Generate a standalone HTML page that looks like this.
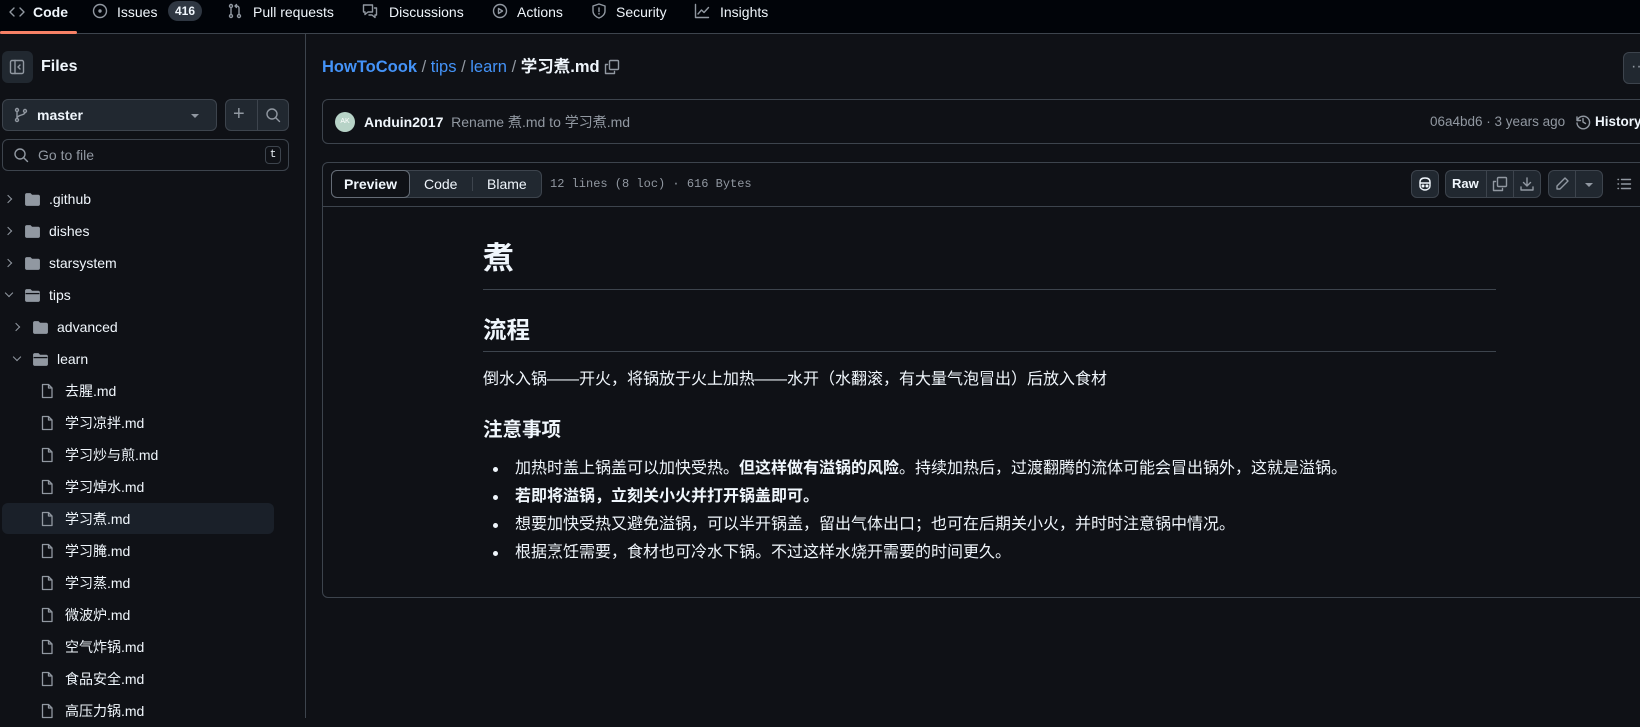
<!DOCTYPE html>
<html><head><meta charset="utf-8"><style>
*{box-sizing:border-box;margin:0;padding:0}
body{width:1640px;height:718px;overflow:hidden;background:#0f1116;color:#f0f6fc;font-family:"Liberation Sans","Noto Sans CJK SC",sans-serif;font-size:14px;position:relative}
.a{position:absolute}
.nav{left:0;top:0;width:1640px;height:34px;background:#010409;border-bottom:1px solid #3d444d}
.ni{position:absolute;top:3px;height:18px;line-height:18px;font-size:14px;color:#f0f6fc;white-space:nowrap}
.ic{position:absolute;fill:none;stroke:#9198a1;stroke-width:1.4;stroke-linecap:round;stroke-linejoin:round}
.side{left:0;top:34px;width:306px;height:684px;border-right:1px solid #3d444d}
.btn{position:absolute;border:1px solid #3d444d;border-radius:6px;background:#212830}
.tree{position:absolute;left:0;font-size:14px;color:#f0f6fc;height:32px;line-height:32px;white-space:nowrap}
.tree span{position:absolute;top:0}
.tree svg{position:absolute;top:8px}
.chev{position:absolute;width:6px;height:6px;border-right:1.5px solid #9198a1;border-bottom:1.5px solid #9198a1}
.box{border:1px solid #3d444d;border-radius:6px}
.md{position:absolute;left:483px;width:1013px;color:#f0f6fc}
.md li{position:absolute;left:32px;font-size:16px;white-space:nowrap;height:28px;line-height:28px}
.md li:before{content:"";position:absolute;left:-22px;top:12px;width:5px;height:5px;border-radius:50%;background:#f0f6fc}
</style></head><body>
<svg width="0" height="0" style="position:absolute"><defs>
<symbol id="fc" viewBox="0 0 16 16"><path d="M1 3.5C1 2.7 1.7 2 2.5 2h3.6l1.5 1.5h5.9c.8 0 1.5.7 1.5 1.5v7.5c0 .8-.7 1.5-1.5 1.5h-11C1.7 14 1 13.3 1 12.5z" fill="#9198a1"/></symbol>
<symbol id="fo" viewBox="0 0 16 16"><path d="M1 3.5C1 2.7 1.7 2 2.5 2h3.6l1.5 1.5h5.9c.8 0 1.5.7 1.5 1.5v7.5c0 .8-.7 1.5-1.5 1.5h-11C1.7 14 1 13.3 1 12.5z" fill="#9198a1"/><path d="M1.5 6.2h13" stroke="#0f1116" stroke-width="1.2"/></symbol>
<symbol id="fi" viewBox="0 0 16 16"><path d="M3.5 1.5h6l3.5 3.5v9.5h-9.5zM9.5 1.5V5H13" fill="none" stroke="#9198a1" stroke-width="1.3" stroke-linejoin="round"/></symbol>
</defs></svg>
<div class="a nav">
 <svg class="ic" style="left:9px;top:4px" width="16" height="16" viewBox="0 0 16 16"><path d="M5 4L1 8l4 4M11 4l4 4-4 4"/></svg>
 <div class="ni" style="left:33px;font-weight:bold">Code</div>
 <div class="a" style="left:0;top:31px;width:77px;height:3px;background:#f78166;border-radius:2px"></div>
 <svg class="ic" style="left:92px;top:3px" width="16" height="16" viewBox="0 0 16 16"><circle cx="8" cy="8" r="6.5"/><circle cx="8" cy="8" r="1" fill="#9198a1"/></svg>
 <div class="ni" style="left:117px">Issues</div>
 <div class="a" style="left:168px;top:1px;width:34px;height:20px;border-radius:10px;background:#2f3742;font-size:12px;line-height:20px;text-align:center;font-weight:bold">416</div>
 <svg class="ic" style="left:227px;top:3px" width="16" height="16" viewBox="0 0 16 16"><circle cx="4" cy="3" r="1.5"/><circle cx="4" cy="13" r="1.5"/><circle cx="12" cy="13" r="1.5"/><path d="M4 5v6M12 11V5c0-1-1-2-2-2H8M9.5 1.5L8 3l1.5 1.5"/></svg>
 <div class="ni" style="left:253px">Pull requests</div>
 <svg class="ic" style="left:362px;top:3px" width="16" height="16" viewBox="0 0 16 16"><path d="M1.5 2h9v7H6l-3 2.5V9H1.5zM12.5 5h2v7h-1.5v2.5L10 12H7"/></svg>
 <div class="ni" style="left:389px">Discussions</div>
 <svg class="ic" style="left:492px;top:3px" width="16" height="16" viewBox="0 0 16 16"><circle cx="8" cy="8" r="6.5"/><path d="M6.5 5.5v5l4-2.5z"/></svg>
 <div class="ni" style="left:517px">Actions</div>
 <svg class="ic" style="left:591px;top:3px" width="16" height="16" viewBox="0 0 16 16"><path d="M8 1l6 2v5c0 3.5-3 6-6 7-3-1-6-3.5-6-7V3zM8 5v3.5M8 10.5v.5"/></svg>
 <div class="ni" style="left:616px">Security</div>
 <svg class="ic" style="left:694px;top:3px" width="16" height="16" viewBox="0 0 16 16"><path d="M1.5 1.5v13h13M4 11l3.5-4 2.5 2.5 4.5-5"/></svg>
 <div class="ni" style="left:720px">Insights</div>
</div>

<div class="a side"></div>
<div class="btn" style="left:2px;top:51px;width:31px;height:32px;background:#212830;border:none"></div>
<svg class="ic" style="left:9px;top:59px" width="16" height="16" viewBox="0 0 16 16"><rect x="1.5" y="1.5" width="13" height="13" rx="1.5"/><path d="M6 1.5v13M11 6l-2 2 2 2"/></svg>
<div class="a" style="left:41px;top:57px;font-size:16px;font-weight:bold;line-height:20px">Files</div>
<div class="btn" style="left:2px;top:99px;width:215px;height:32px"></div>
<svg class="ic" style="left:13px;top:107px" width="16" height="16" viewBox="0 0 16 16"><circle cx="4" cy="3" r="1.5"/><circle cx="4" cy="13" r="1.5"/><circle cx="12" cy="4" r="1.5"/><path d="M4 4.5v7M12 5.5c0 3-8 2-8 6"/></svg>
<div class="a" style="left:37px;top:106px;font-weight:bold;line-height:18px">master</div>
<div class="a" style="left:191px;top:114px;border-left:4px solid transparent;border-right:4px solid transparent;border-top:4px solid #9198a1"></div>
<div class="btn" style="left:225px;top:99px;width:64px;height:32px"></div>
<div class="a" style="left:257px;top:99px;width:1px;height:32px;background:#3d444d"></div>
<div class="a" style="left:233px;top:103px;font-size:20px;color:#9198a1;line-height:22px">+</div>
<svg class="ic" style="left:265px;top:107px" width="16" height="16" viewBox="0 0 16 16"><circle cx="7" cy="7" r="5"/><path d="M11 11l3.5 3.5"/></svg>
<div class="a box" style="left:2px;top:139px;width:287px;height:32px;background:#0f1116"></div>
<svg class="ic" style="left:13px;top:147px" width="16" height="16" viewBox="0 0 16 16"><circle cx="7" cy="7" r="5"/><path d="M11 11l3.5 3.5"/></svg>
<div class="a" style="left:38px;top:146px;color:#9198a1;line-height:18px">Go to file</div>
<div class="a" style="left:265px;top:146px;width:16px;height:18px;border:1px solid #3d444d;border-radius:4px;font-size:11px;text-align:center;line-height:16px;color:#f0f6fc;font-family:'Liberation Mono',monospace">t</div>

<div class="a" style="left:2px;top:503px;width:272px;height:31px;background:#1a2029;border-radius:6px"></div>

<div class="tree" style="top:183px"><i class="chev" style="left:5px;top:13px;transform:rotate(-45deg)"></i><svg style="left:24px" width="17" height="17"><use href="#fc"/></svg><span style="left:49px">.github</span></div>
<div class="tree" style="top:215px"><i class="chev" style="left:5px;top:13px;transform:rotate(-45deg)"></i><svg style="left:24px" width="17" height="17"><use href="#fc"/></svg><span style="left:49px">dishes</span></div>
<div class="tree" style="top:247px"><i class="chev" style="left:5px;top:13px;transform:rotate(-45deg)"></i><svg style="left:24px" width="17" height="17"><use href="#fc"/></svg><span style="left:49px">starsystem</span></div>
<div class="tree" style="top:279px"><i class="chev" style="left:6px;top:11px;transform:rotate(45deg)"></i><svg style="left:24px" width="17" height="17"><use href="#fo"/></svg><span style="left:49px">tips</span></div>
<div class="tree" style="top:311px"><i class="chev" style="left:13px;top:13px;transform:rotate(-45deg)"></i><svg style="left:32px" width="17" height="17"><use href="#fc"/></svg><span style="left:57px">advanced</span></div>
<div class="tree" style="top:343px"><i class="chev" style="left:14px;top:11px;transform:rotate(45deg)"></i><svg style="left:32px" width="17" height="17"><use href="#fo"/></svg><span style="left:57px">learn</span></div>
<div class="tree" style="top:375px"><svg style="left:39px" width="16" height="16"><use href="#fi"/></svg><span style="left:65px">去腥.md</span></div>
<div class="tree" style="top:407px"><svg style="left:39px" width="16" height="16"><use href="#fi"/></svg><span style="left:65px">学习凉拌.md</span></div>
<div class="tree" style="top:439px"><svg style="left:39px" width="16" height="16"><use href="#fi"/></svg><span style="left:65px">学习炒与煎.md</span></div>
<div class="tree" style="top:471px"><svg style="left:39px" width="16" height="16"><use href="#fi"/></svg><span style="left:65px">学习焯水.md</span></div>
<div class="tree" style="top:503px"><svg style="left:39px" width="16" height="16"><use href="#fi"/></svg><span style="left:65px">学习煮.md</span></div>
<div class="tree" style="top:535px"><svg style="left:39px" width="16" height="16"><use href="#fi"/></svg><span style="left:65px">学习腌.md</span></div>
<div class="tree" style="top:567px"><svg style="left:39px" width="16" height="16"><use href="#fi"/></svg><span style="left:65px">学习蒸.md</span></div>
<div class="tree" style="top:599px"><svg style="left:39px" width="16" height="16"><use href="#fi"/></svg><span style="left:65px">微波炉.md</span></div>
<div class="tree" style="top:631px"><svg style="left:39px" width="16" height="16"><use href="#fi"/></svg><span style="left:65px">空气炸锅.md</span></div>
<div class="tree" style="top:663px"><svg style="left:39px" width="16" height="16"><use href="#fi"/></svg><span style="left:65px">食品安全.md</span></div>
<div class="tree" style="top:695px"><svg style="left:39px" width="16" height="16"><use href="#fi"/></svg><span style="left:65px">高压力锅.md</span></div>

<div class="a" style="left:322px;top:56px;font-size:16.5px;line-height:22px;white-space:nowrap"><span style="color:#4493f8;font-weight:bold">HowToCook</span> <span style="color:#9198a1">/</span> <span style="color:#4493f8">tips</span> <span style="color:#9198a1">/</span> <span style="color:#4493f8">learn</span> <span style="color:#9198a1">/</span> <b>学习煮.md</b></div>
<svg class="ic" style="left:604px;top:59px" width="16" height="16" viewBox="0 0 16 16"><rect x="5.5" y="1.5" width="9" height="9" rx="1"/><path d="M3.5 5.5h-2v9h9v-2"/></svg>
<div class="btn" style="left:1623px;top:52px;width:30px;height:32px"></div>
<div class="a" style="left:1631px;top:58px;color:#9198a1;font-size:16px">··</div>

<div class="a box" style="left:322px;top:99px;width:1340px;height:45px"></div>
<div class="a" style="left:335px;top:112px;width:20px;height:20px;border-radius:50%;background:#b7d3c7;font-size:7px;color:#fff;text-align:center;line-height:20px">AK</div>
<div class="a" style="left:364px;top:113px;line-height:18px;white-space:nowrap"><b>Anduin2017</b>&nbsp;&nbsp;<span style="color:#9198a1">Rename 煮.md to 学习煮.md</span></div>
<div class="a" style="left:1430px;top:113px;line-height:18px;color:#9198a1;font-size:13.5px;white-space:nowrap">06a4bd6 · 3 years ago</div>
<svg class="ic" style="left:1575px;top:114px;stroke:#9198a1" width="16" height="16" viewBox="0 0 16 16"><path d="M2 3v3.5h3.5"/><path d="M2.3 6.5A6.3 6.3 0 1 1 2 9"/><path d="M8 4.5V8l2.5 1.5"/></svg>
<div class="a" style="left:1595px;top:113px;line-height:18px;font-weight:bold;font-size:13.5px">History</div>

<div class="a box" style="left:322px;top:162px;width:1340px;height:436px"></div>
<div class="a" style="left:323px;top:206px;width:1320px;height:1px;background:#3d444d"></div>
<div class="a" style="left:331px;top:170px;width:211px;height:28px;border-radius:6px;background:#212830;border:1px solid #3d444d"></div>
<div class="a" style="left:331px;top:170px;width:79px;height:28px;border-radius:6px;background:#0f1116;border:1px solid #656c76;font-weight:bold;text-align:center;line-height:26px">Preview</div>
<div class="a" style="left:424px;top:170px;line-height:28px">Code</div>
<div class="a" style="left:472px;top:177px;width:1px;height:14px;background:#3d444d"></div>
<div class="a" style="left:487px;top:170px;line-height:28px">Blame</div>
<div class="a" style="left:550px;top:176px;font-family:'Liberation Mono',monospace;font-size:12px;color:#9198a1;line-height:16px;white-space:nowrap">12 lines (8 loc) · 616 Bytes</div>

<div class="btn" style="left:1411px;top:170px;width:28px;height:28px"></div>
<svg class="ic" style="left:1417px;top:176px;stroke:#f0f6fc" width="16" height="16" viewBox="0 0 16 16"><path d="M3 6c0-3 2-4 5-4s5 1 5 4v4c0 2-2 4-5 4s-5-2-5-4z"/><circle cx="6" cy="10" r=".8" fill="#f0f6fc"/><circle cx="10" cy="10" r=".8" fill="#f0f6fc"/><path d="M3 7h10"/></svg>
<div class="btn" style="left:1445px;top:170px;width:96px;height:28px"></div>
<div class="a" style="left:1486px;top:170px;width:1px;height:28px;background:#3d444d"></div>
<div class="a" style="left:1513px;top:170px;width:1px;height:28px;background:#3d444d"></div>
<div class="a" style="left:1452px;top:170px;line-height:28px;font-weight:bold;font-size:13px">Raw</div>
<svg class="ic" style="left:1492px;top:176px" width="16" height="16" viewBox="0 0 16 16"><rect x="5.5" y="1.5" width="9" height="9" rx="1"/><path d="M3.5 5.5h-2v9h9v-2"/></svg>
<svg class="ic" style="left:1519px;top:176px" width="16" height="16" viewBox="0 0 16 16"><path d="M8 2v8M4.5 6.5L8 10l3.5-3.5M2 11v3h12v-3"/></svg>
<div class="btn" style="left:1548px;top:170px;width:55px;height:28px"></div>
<div class="a" style="left:1575px;top:170px;width:1px;height:28px;background:#3d444d"></div>
<svg class="ic" style="left:1554px;top:176px" width="16" height="16" viewBox="0 0 16 16"><path d="M11 2l3 3-8 8H3v-3z"/></svg>
<div class="a" style="left:1585px;top:183px;border-left:4px solid transparent;border-right:4px solid transparent;border-top:4px solid #9198a1"></div>
<svg class="ic" style="left:1616px;top:176px" width="16" height="16" viewBox="0 0 16 16"><path d="M5.5 3.5h9M5.5 8h9M5.5 12.5h9M2 3.5h.5M2 8h.5M2 12.5h.5"/></svg>

<div class="md" style="top:240px;font-size:31px;font-weight:bold;line-height:38px">煮</div>
<div class="a" style="left:483px;top:289px;width:1013px;height:1px;background:#3d444d"></div>
<div class="md" style="top:315px;font-size:23.5px;font-weight:bold;line-height:30px">流程</div>
<div class="a" style="left:483px;top:351px;width:1013px;height:1px;background:#3d444d"></div>
<div class="md" style="top:366px;font-size:16px;line-height:28px">倒水入锅——开火，将锅放于火上加热——水开（水翻滚，有大量气泡冒出）后放入食材</div>
<div class="md" style="top:417px;font-size:19.5px;font-weight:bold;line-height:26px">注意事项</div>
<ul class="md" style="top:455px;list-style:none">
<li style="top:0">加热时盖上锅盖可以加快受热。<b>但这样做有溢锅的风险</b>。持续加热后，过渡翻腾的流体可能会冒出锅外，这就是溢锅。</li>
<li style="top:28px"><b>若即将溢锅，立刻关小火并打开锅盖即可。</b></li>
<li style="top:56px">想要加快受热又避免溢锅，可以半开锅盖，留出气体出口；也可在后期关小火，并时时注意锅中情况。</li>
<li style="top:84px">根据烹饪需要，食材也可冷水下锅。不过这样水烧开需要的时间更久。</li>
</ul>
</body></html>
